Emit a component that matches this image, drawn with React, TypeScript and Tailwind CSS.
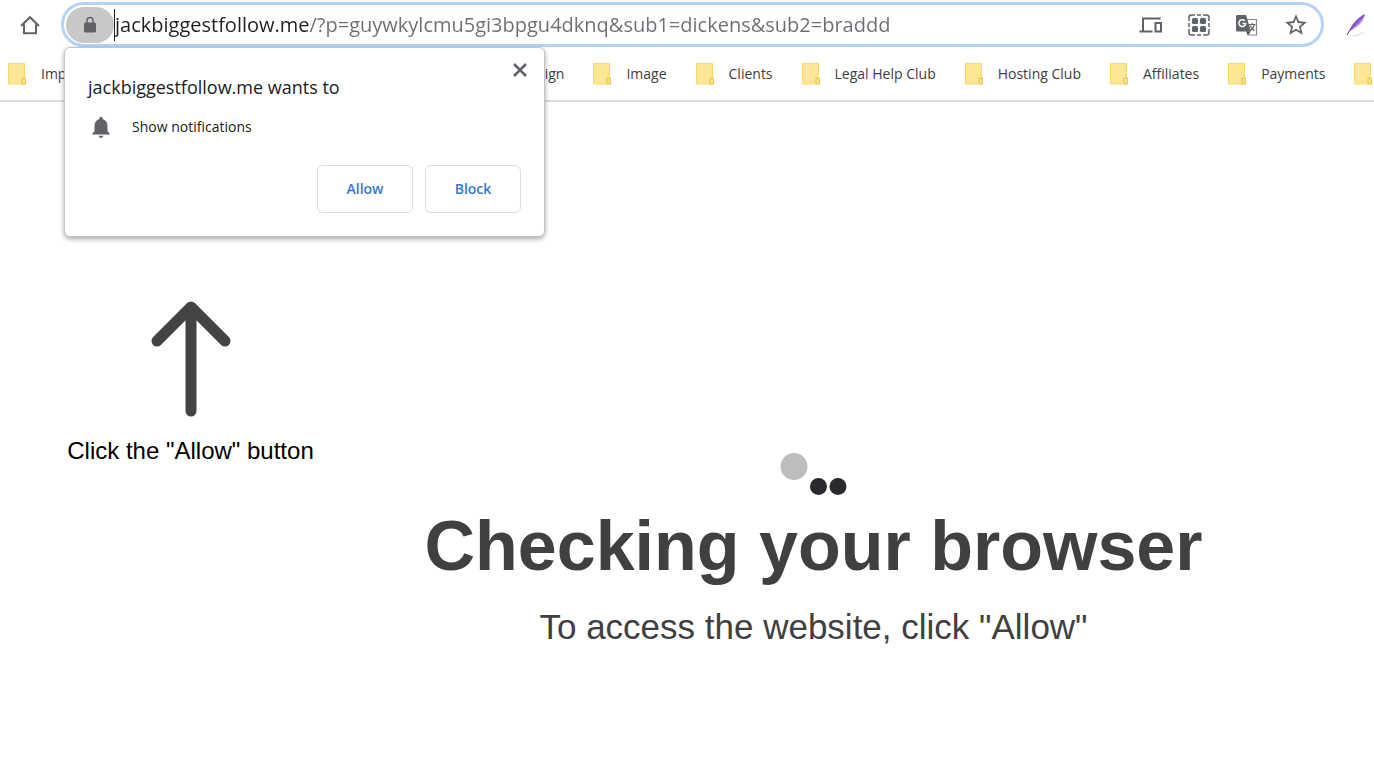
import React, { useState } from 'react';
import { MdNotifications, MdStarBorder } from 'react-icons/md';

const bookmarks = ['Image', 'Clients', 'Legal Help Club', 'Hosting Club', 'Affiliates', 'Payments'];

const HomeIcon = () => (
  <svg viewBox="0 0 20 20" className="h-5 w-5" fill="none" stroke="#5f6368" strokeWidth="2">
    <path d="M1 11 10 2.200 19 11M4 9.500v8.700h12V9.500" />
  </svg>
);

const LockIcon = () => (
  <svg viewBox="0 0 14 18" className="h-[18px] w-[14px]">
    <rect x="1" y="6.500" width="12" height="10" rx="1.500" fill="#5f6368" />
    <path d="M4 7V4.500a3 3 0 0 1 6 0V7" fill="none" stroke="#5f6368" strokeWidth="1.500" />
  </svg>
);

const DevicesIcon = () => (
  <svg viewBox="0 0 24 24" className="h-6 w-6" fill="none" stroke="#5f6368" strokeWidth="2">
    <path d="M21.500 5.500H4V18M0.500 18.500h13" />
    <path d="M16.500 10H22v8.500h-5.500z" />
  </svg>
);

const ScanIcon = () => (
  <svg viewBox="0 0 24 24" className="h-6 w-6" fill="none" stroke="#5f6368" strokeWidth="1.500">
    <path d="M2 8V4.500A2.500 2.500 0 0 1 4.500 2H8M10 2h4M16 2h3.500A2.500 2.500 0 0 1 22 4.500V8M22 10v4M22 16v3.500a2.500 2.500 0 0 1-2.500 2.500H16M14 22h-4M8 22H4.500A2.500 2.500 0 0 1 2 19.500V16M2 14v-4" />
    <g fill="#5f6368" stroke="none">
      <rect x="5" y="5" width="6" height="6" rx="1.500" />
      <rect x="13" y="5" width="6" height="6" rx="1.500" />
      <rect x="5" y="13" width="6" height="6" rx="1.500" />
      <rect x="13" y="13" width="6" height="6" rx="1.500" />
    </g>
  </svg>
);

const TranslateIcon = () => (
  <svg viewBox="0 0 24 24" className="h-6 w-6">
    <path d="M9 6.500h12.500v15.500h-8.500z" fill="#fff" stroke="#85888c" strokeWidth="1.200" />
    <path d="M2.500 2H11l5 16.500H2.500A1.500 1.500 0 0 1 1 17V3.500A1.500 1.500 0 0 1 2.500 2z" fill="#5f6368" />
    <path d="M11 18.500h5l-3 3.500z" fill="#4a4d51" />
    <path d="M9.800 7.800a3.400 3.400 0 1 0 .9 2.700H7.500" fill="none" stroke="#fff" strokeWidth="1.500" />
    <path d="M14 11.500h6.500M17 10v1.500M19.500 11.500c-.6 2.500-2.200 4.500-4 6M15 12.500c1 2.200 2.500 4 4.500 5.500" fill="none" stroke="#5f6368" strokeWidth="1.200" />
  </svg>
);

const CloseIcon = () => (
  <svg viewBox="0 0 24 24" className="h-6 w-6" fill="none" stroke="#5f6368" strokeWidth="2.500">
    <path d="M6 6l12 12M18 6 6 18" />
  </svg>
);

const FeatherIcon = () => (
  <svg viewBox="0 0 20 24" className="h-6 w-5">
    <path d="M3 23c6-.5 11-2 16-5-3 4-9 6-16 5z" fill="#dedede" />
    <path d="M3 19C5 11 11 5 19 1c0 6-5 12-14 16.500z" fill="#c9aeee" />
    <path d="M4 17.500C6 11 12 5 19 1 16 8 11 13 5 17z" fill="#9a63da" />
    <path d="M1 22C5 14 11 7 18 2" fill="none" stroke="#6b3aa3" strokeWidth="1" />
  </svg>
);

const FolderIcon = () => (
  <svg viewBox="0 0 18 22" className="h-[22px] w-[18px] flex-shrink-0">
    <rect x="0.500" y="0.500" width="16" height="20.500" fill="#ffe694" stroke="#fcd969" />
    <path d="M14 21v-6h3.500v6z" fill="#ffe389" stroke="#e9c343" />
  </svg>
);

const Bookmark: React.FC<{ name: string }> = ({ name }) => (
  <a href="#" className="flex items-center gap-[15px] whitespace-nowrap">
    <FolderIcon />
    {name}
  </a>
);

const PermissionDialog: React.FC<{ onClose: () => void }> = ({ onClose }) => (
  <div
    role="dialog"
    aria-labelledby="permission-title"
    className="absolute top-[47px] left-16 z-10 w-[481px] rounded-md border border-[#c4c4c6] bg-white px-[23px] pt-[23px] pb-[23px] shadow-[0_2px_5px_rgba(0,0,0,0.35)]"
  >
    <button aria-label="Close" onClick={onClose} className="absolute top-[10px] right-3">
      <CloseIcon />
    </button>
    <h2 id="permission-title" className="text-lg leading-8 text-[#202124]">
      jackbiggestfollow.me wants to
    </h2>
    <div className="mt-3 flex h-6 items-center gap-[18px] text-sm text-[#202124]">
      <MdNotifications className="h-[26px] w-[26px] text-[#5f6368]" />
      Show notifications
    </div>
    <div className="mt-[26px] flex justify-end gap-3 text-sm font-semibold text-[#3a76d2]">
      <button onClick={onClose} className="h-12 w-24 rounded-md border border-[#dadce0]">
        Allow
      </button>
      <button onClick={onClose} className="h-12 w-24 rounded-md border border-[#dadce0]">
        Block
      </button>
    </div>
  </div>
);

export default function App() {
  const [url, setUrl] = useState('jackbiggestfollow.me/?p=guywkylcmu5gi3bpgu4dknq&sub1=dickens&sub2=braddd');
  const [showDialog, setShowDialog] = useState(true);

  return (
    <div className="min-h-screen overflow-hidden bg-white font-['Open_Sans',sans-serif]">
      <header className="relative border-b-2 border-[#dadce0]">
        {/* Toolbar */}
        <div className="flex items-center pt-[2px] pr-2 pl-5">
          <button aria-label="Home">
            <HomeIcon />
          </button>
          <div className="ml-[21px] flex h-[45px] flex-1 items-center rounded-full border-3 border-[#b5d3f7] pr-3 pl-[2px]">
            <button
              aria-label="Site information"
              className="flex h-9 w-12 items-center justify-center rounded-full bg-[#c8c8c9]"
            >
              <LockIcon />
            </button>
            <span className="h-8 w-px bg-[#202124]" />
            <input
              aria-label="Address"
              value={url}
              spellCheck={false}
              onChange={(e) => setUrl(e.target.value)}
              className="h-9 min-w-0 flex-1 bg-linear-to-r from-[#202124] from-[194px] to-[#6b6f73] to-[194px] bg-clip-text text-xl text-transparent outline-none"
            />
            <div className="flex items-center gap-6 text-[#5f6368]">
              <button aria-label="Send to your devices">
                <DevicesIcon />
              </button>
              <button aria-label="Create QR code">
                <ScanIcon />
              </button>
              <button aria-label="Translate this page">
                <TranslateIcon />
              </button>
              <button aria-label="Bookmark this page">
                <MdStarBorder className="h-[26px] w-[26px]" />
              </button>
            </div>
          </div>
          <button aria-label="Feather extension" className="ml-[22px]">
            <FeatherIcon />
          </button>
        </div>

        {/* Bookmarks bar */}
        <nav className="flex h-[53px] items-center gap-[29px] pl-2 text-sm text-[#3c4043]">
          <div className="w-[450px] flex-shrink-0">
            <Bookmark name="Imp" />
          </div>
          <Bookmark name="Design" />
          {bookmarks.map((name) => (
            <Bookmark key={name} name={name} />
          ))}
          <a href="#" aria-label="More bookmarks">
            <FolderIcon />
          </a>
        </nav>

        {showDialog && <PermissionDialog onClose={() => setShowDialog(false)} />}
      </header>

      <main className="flex px-16 pt-[199px] font-['Liberation_Sans',Arial,sans-serif]">
        <div className="flex w-[253px] flex-shrink-0 flex-col items-center">
          <svg
            viewBox="0 0 80 116"
            className="h-[116px] w-20"
            fill="none"
            stroke="#444"
            strokeWidth="11"
            strokeLinecap="round"
            strokeLinejoin="round"
          >
            <path d="M40 110V6M6 40 40 6l34 34" />
          </svg>
          <p className="mt-4 text-2xl leading-9 whitespace-nowrap text-black">Click the "Allow" button</p>
        </div>

        <section className="flex min-w-0 flex-1 flex-col items-center pt-[151px] text-center text-[#404040]">
          <svg viewBox="0 0 68 44" className="h-11 w-[68px]">
            <circle cx="14" cy="14.500" r="13.500" fill="#bdbdbd" />
            <circle cx="38.500" cy="34.500" r="8.500" fill="#2a2a2e" />
            <circle cx="58" cy="34.500" r="8.500" fill="#2a2a2e" />
          </svg>
          <h1 className="mt-[10px] text-[70px] leading-20 font-bold whitespace-nowrap">Checking your browser</h1>
          <p className="mt-[21px] text-[35px] leading-10 whitespace-nowrap">To access the website, click "Allow"</p>
        </section>
      </main>
    </div>
  );
}
